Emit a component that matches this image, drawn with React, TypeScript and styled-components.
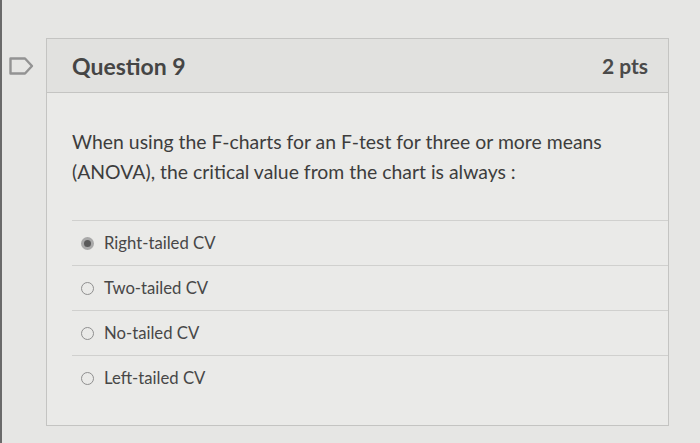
import React from "react";
import styled, { createGlobalStyle } from "styled-components";

const textColor = "#3d3d3d";
const lineColor = "#d0d0ce";

const GlobalStyle = createGlobalStyle`
  html, body {
    margin: 0;
    padding: 0;
    background: #e6e6e4;
  }
  body {
    font-family: Lato, "Open Sans", sans-serif;
    color: ${textColor};
  }
`;

const Page = styled.div`
  display: flex;
  align-items: flex-start;
  width: 700px;
  height: 443px;
  box-sizing: border-box;
  padding-top: 38px;
  border-left: 2px solid #6a6a6a;
  background: #e6e6e4;
`;

const Gutter = styled.div`
  width: 44px;
  display: flex;
  justify-content: flex-start;
  padding: 18px 0 0 6px;
  box-sizing: border-box;
`;

const Card = styled.div`
  width: 623px;
  height: 388px;
  box-sizing: border-box;
  border: 1px solid #c4c4c2;
  background: #eaeae8;
  display: flex;
  flex-direction: column;
`;

const Header = styled.div`
  height: 54px;
  box-sizing: border-box;
  display: flex;
  align-items: center;
  justify-content: space-between;
  padding: 0 20px 0 25px;
  background: #e1e1df;
  border-bottom: 1px solid #c4c4c2;
`;

const Title = styled.h2`
  margin: 0;
  font-size: 23px;
  font-weight: 700;
  color: #454545;
`;

const Points = styled.span`
  font-size: 21px;
  font-weight: 700;
  color: #4a4a4a;
`;

const Body = styled.div`
  padding: 34px 0 0 25px;
`;

const Prompt = styled.p`
  margin: 0 0 33px;
  font-size: 19.4px;
  line-height: 30px;
  color: ${textColor};
`;

const Answers = styled.div`
  display: flex;
  flex-direction: column;
  border-top: 1px solid ${lineColor};
`;

const Answer = styled.label`
  display: flex;
  align-items: center;
  gap: 10px;
  height: 44px;
  padding-left: 9px;
  border-bottom: 1px solid ${lineColor};
  font-size: 16.7px;
  color: #474747;
  &:last-child {
    border-bottom: none;
  }
`;

const Radio = styled.span<{ $checked?: boolean }>`
  width: 13px;
  height: 13px;
  border-radius: 50%;
  box-sizing: border-box;
  border: ${(p) => (p.$checked ? "3px solid #a9a9a9" : "1.5px solid #8f8f8f")};
  background: ${(p) => (p.$checked ? "#5a5a5a" : "transparent")};
  flex-shrink: 0;
`;

function FlagIcon() {
  return (
    <svg width="28" height="20" viewBox="0 0 28 20">
      <path
        d="M2.5 2.5 H17 L24 10 L17 17.5 H2.5 Z"
        fill="none"
        stroke="#939393"
        strokeWidth="2.4"
        strokeLinejoin="round"
      />
    </svg>
  );
}

const options = [
  { label: "Right-tailed CV", checked: true },
  { label: "Two-tailed CV", checked: false },
  { label: "No-tailed CV", checked: false },
  { label: "Left-tailed CV", checked: false },
];

export default function App() {
  return (
    <>
      <GlobalStyle />
      <Page>
        <Gutter>
          <FlagIcon />
        </Gutter>
        <Card>
          <Header>
            <Title>Question 9</Title>
            <Points>2 pts</Points>
          </Header>
          <Body>
            <Prompt>
              When using the F-charts for an F-test for three or more means
              <br />
              (ANOVA), the critical value from the chart is always :
            </Prompt>
            <Answers>
              {options.map((o) => (
                <Answer key={o.label}>
                  <Radio $checked={o.checked} />
                  {o.label}
                </Answer>
              ))}
            </Answers>
          </Body>
        </Card>
      </Page>
    </>
  );
}
